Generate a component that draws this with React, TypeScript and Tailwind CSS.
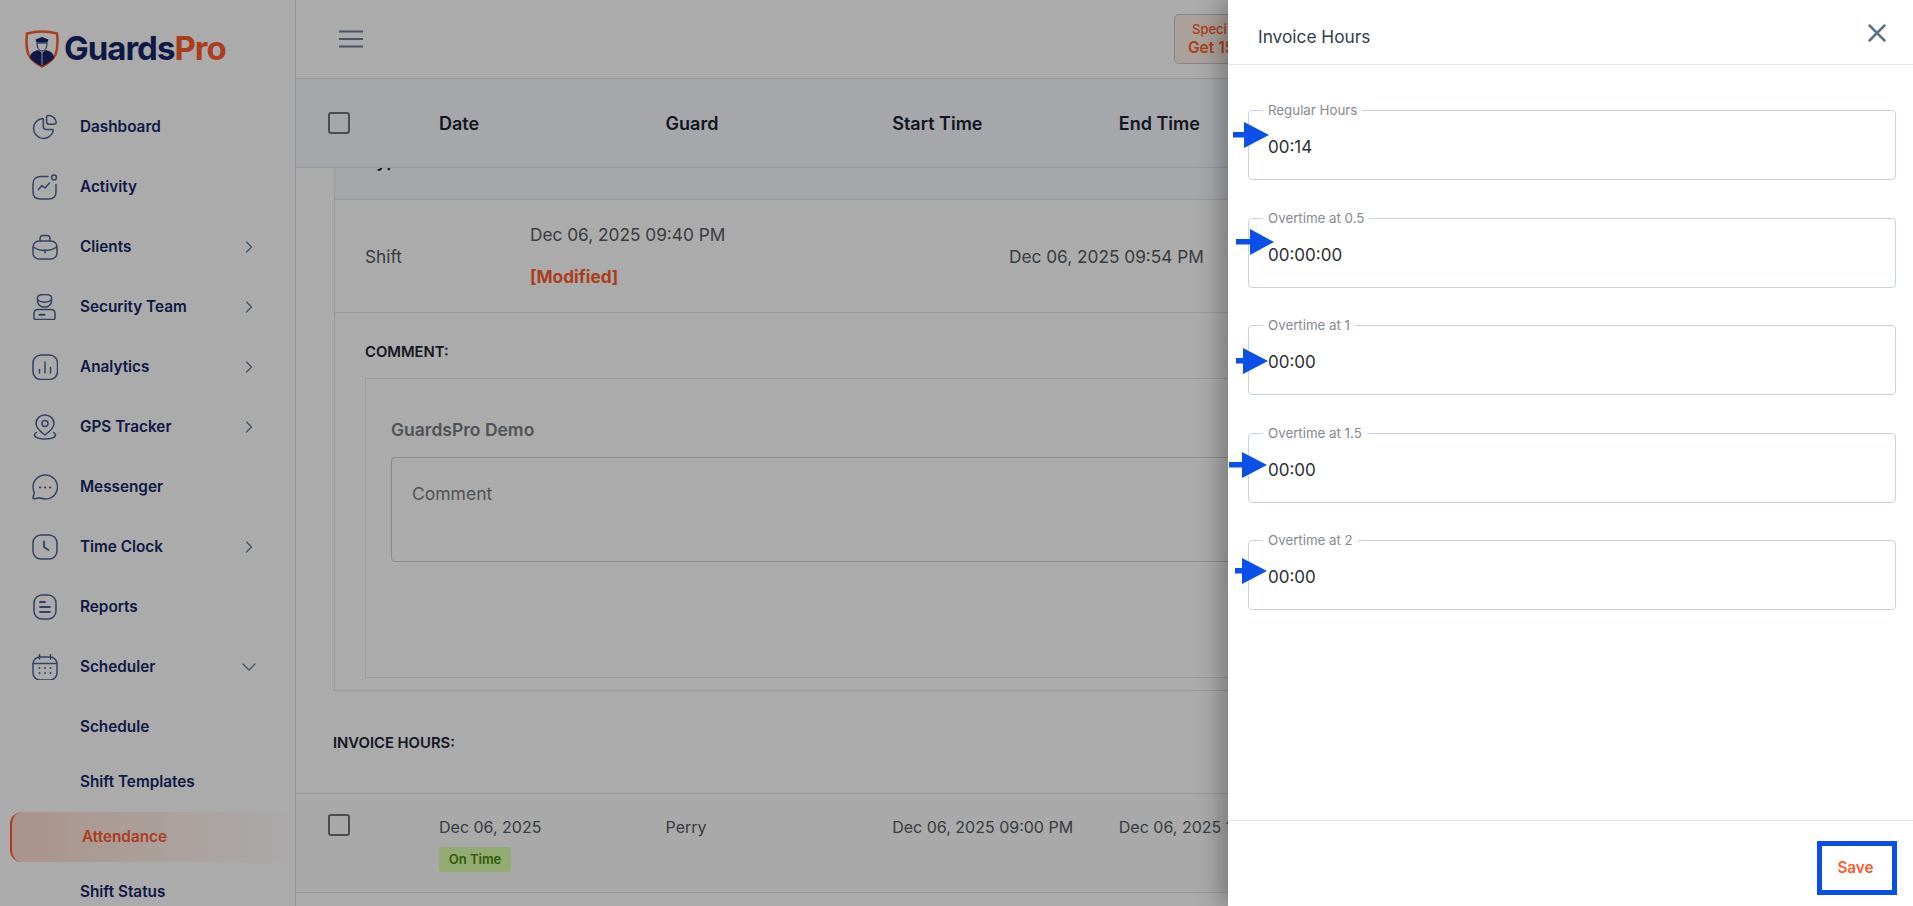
import { ReactNode } from "react";
import { ChevronDown, ChevronRight, X } from "lucide-react";

const FONT = "font-['Inter','Noto_Sans',sans-serif]";

function Ico({ children }: { children: ReactNode }) {
  return (
    <svg viewBox="0 0 26 26" fill="none" stroke="currentColor" strokeWidth="1.5" strokeLinecap="round" strokeLinejoin="round" className="size-[26px] shrink-0 text-[#4e6296]">
      {children}
    </svg>
  );
}

const ICONS: Record<string, ReactNode> = {
  Dashboard: (
    <>
      <path d="M10.5 4.5a10 10 0 1 0 10.8 12.2c.2-.8-.4-1.2-1-1.2h-6c-1.7 0-3-1.3-3-3V5.6c0-.7-.2-1.2-.8-1.1Z" />
      <path d="M16 1.5c3.6-.6 8 2.4 8.2 7 0 1-.7 1.7-1.6 1.7H17c-1.4 0-2.4-1-2.4-2.4V3c0-.8.6-1.4 1.4-1.5Z" />
    </>
  ),
  Activity: (
    <>
      <path d="M16 2.5H8.5C4.5 2.5 1 5 1 10v8c0 4.5 3 7 7.5 7h8c4.5 0 7.5-2.5 7.5-7v-7.5" />
      <circle cx="22" cy="3.5" r="2.4" />
      <path d="M6.5 15.5 10 11.5l3 2.5 4.5-5" />
    </>
  ),
  Clients: (
    <>
      <rect x="1" y="7" width="24" height="18" rx="6" />
      <path d="M8 7V5c0-2 1-3.5 3-3.5h4c2 0 3 1.5 3 3.500v2" />
      <path d="M1.5 13c3 2.500 7 3.500 11.500 3.500S21.500 15.500 24.500 13" />
      <path d="M13 16v3" />
    </>
  ),
  "Security Team": (
    <>
      <path d="M5.500 3.500c0-2 2-3 7-3s7 1 7 3V7c0 3.500-3 6-7 6s-7-2.500-7-6Z" />
      <path d="M5.500 6c2 1.500 4.500 2.300 7 2.300s5-.8 7-2.300" />
      <path d="M6 15.500h13c2.300 0 4 1.500 4 4V24c0 .8-.5 1.500-1.500 1.500h-18C2.500 25.500 2 24.800 2 24v-4.500c0-2.500 1.700-4 4-4Z" />
      <path d="M7.500 20.800h5" strokeWidth="2" />
    </>
  ),
  Analytics: (
    <>
      <rect x="1" y="1" width="24.5" height="24.5" rx="8" />
      <path d="M7.5 15.5V19M13 8v11M18.500 13.500V19" />
    </>
  ),
  "GPS Tracker": (
    <>
      <path d="M13 1c5 0 9 3.5 9 8.500 0 4.500-5.500 9-9 11.500-3.500-2.500-9-7-9-11.500C4 4.500 8 1 13 1Z" />
      <circle cx="13" cy="9.5" r="3" />
      <path d="M4.5 18.500c-1.500 1-2.500 2-2 3.200 1 2 5.500 3.300 10.500 3.300s9.500-1.300 10.500-3.300c.5-1.200-.5-2.200-2-3.200" />
    </>
  ),
  Messenger: (
    <>
      <path d="M13.5 1C6.500 1 1 6.500 1 13c0 2 .5 4 1.300 5.500l-1.300 5c-.2 1 .8 1.500 1.500 1.300l5-1c1.800.7 4 1.200 6 1.200 6.800 0 12-5.500 12-12S20 1 13.500 1Z" />
      <path d="M8 13.500h.2M13 13.500h.2M18 13.500h.2" strokeWidth="2.2" />
    </>
  ),
  "Time Clock": (
    <>
      <rect x="1" y="1" width="24" height="24" rx="8" />
      <path d="M12 7.500V13l4.500 3" strokeWidth="1.8" />
    </>
  ),
  Reports: (
    <>
      <rect x="2" y="1" width="22" height="24" rx="8" />
      <path d="M8 8h5M8 13h10M8 18h10" strokeWidth="1.8" />
    </>
  ),
  Scheduler: (
    <>
      <rect x="1" y="3" width="24" height="23" rx="7" />
      <path d="M7.500 .5V5M18.500 .5V5M1 9.500h24" />
      <path d="M7.500 14h.1M13 14h.1M18.500 14h.1M7.500 19h.1M13 19h.1M18.500 19h.1" strokeWidth="1.8" />
    </>
  ),
};

const NAV = [
  { name: "Dashboard" },
  { name: "Activity" },
  { name: "Clients", arrow: true },
  { name: "Security Team", arrow: true },
  { name: "Analytics", arrow: true },
  { name: "GPS Tracker", arrow: true },
  { name: "Messenger" },
  { name: "Time Clock", arrow: true },
  { name: "Reports" },
];

function Logo() {
  return (
    <div className="flex h-[78px] shrink-0 items-center pl-[25px] pt-[19px]">
      <svg viewBox="0 0 34 38" className="h-[38px] w-[34px] shrink-0">
        <path d="M2 3.500C8 2 13 1.500 17 1.500S26 2 32 3.500c1 9 .5 16-1.500 21-2.500 5-7.500 9-13.500 12-6-3-11-7-13.500-12-2-5-2.500-12-1.500-21Z" fill="#fff" stroke="#ff5c2b" strokeWidth="2.5" />
        <path d="M10.500 9.500 17 7l6.500 2.500-1 3h-11z" fill="#152868" />
        <path d="M12 13h10c0 4-1.500 8-5 8s-5-4-5-8Z" fill="#ffffff" stroke="#152868" strokeWidth="1" />
        <path d="M5 28c0-5 4-7 8-8l4 3 4-3c4 1 8 3 8 8-3 3.500-7 6-12 8-5-2-9-4.500-12-8Z" fill="#152868" />
        <path d="M17 23v12" stroke="#fff" strokeWidth="0.8" />
      </svg>
      <span className="ml-[5px] text-[33px] font-bold leading-none tracking-[-1px] text-[#152868]">
        Guards<span className="text-[#ff5c2b]">Pro</span>
      </span>
    </div>
  );
}

function Sidebar() {
  return (
    <aside className="flex w-[296px] shrink-0 flex-col border-r border-[#dfe3ea] bg-white text-[15.3px] font-semibold text-[#152868]">
      <Logo />
      <nav className="pt-[19px]">
        {NAV.map((n) => (
          <div key={n.name} className="flex h-[60px] items-center gap-[22px] pl-[32px] pr-[36px]">
            <Ico>{ICONS[n.name]}</Ico>
            <span className="flex-1">{n.name}</span>
            {n.arrow && <ChevronRight className="size-5 text-[#66799f]" strokeWidth={1.5} />}
          </div>
        ))}
        <div className="flex h-[60px] items-center gap-[22px] pl-[32px] pr-[34px]">
          <Ico>{ICONS.Scheduler}</Ico>
          <span className="flex-1">Scheduler</span>
          <ChevronDown className="size-6 text-[#66799f]" strokeWidth={1.25} />
        </div>
        <div className="flex h-[60px] items-center pl-[80px]">Schedule</div>
        <div className="flex h-[50px] items-center pl-[80px]">Shift Templates</div>
        <div className="ml-[10px] mt-[5px] flex h-[50px] items-center rounded-l-[12px] border-l-2 border-[#ff5c2b] bg-gradient-to-r from-[#ffdcd0] to-white pl-[70px] text-[#ff5c2b]">
          Attendance
        </div>
        <div className="flex h-[60px] items-center pl-[80px]">Shift Status</div>
      </nav>
    </aside>
  );
}

function Checkbox() {
  return <span className="block size-[22px] rounded-[3px] border-2 border-[#6f7378]" />;
}

function Main() {
  return (
    <main className="min-w-0 flex-1 bg-white text-[17.25px] text-[#555a60]">
      <header className="flex h-[79px] items-center border-b border-[#d8dde6] pl-[43px]">
        <svg viewBox="0 0 24 18" className="h-[18px] w-[24px] text-[#6f7f96]" fill="none" stroke="currentColor" strokeWidth="2">
          <path d="M0 1.500h24M0 9h24M0 16.500h24" />
        </svg>
        <div className="ml-[811px] flex h-[50px] w-[70px] flex-col justify-center whitespace-nowrap rounded-[5px] border border-[#c0c8d8] bg-[#fff0e6] text-[#ff5c2b]">
          <span className="ml-[17px] text-[13px] font-medium leading-[18px]">Speci</span>
          <span className="ml-[13px] text-[15.5px] font-semibold leading-[20px]">Get 15</span>
        </div>
      </header>
      <div className="grid h-[89px] grid-cols-[111px_226.6px_226.6px_226.6px_226.6px] items-center border-b border-[#dfe3ea] bg-[#f6f9ff] pl-[32px] text-[18px] font-semibold text-[#1c2433]">
        <Checkbox />
        <span>Date</span>
        <span>Guard</span>
        <span>Start Time</span>
        <span>End Time</span>
      </div>
      <section className="ml-[38px] flex h-[523px] flex-col border-b border-l border-[#dfe3ea]">
        <div className="h-[32px] overflow-hidden border-b border-[#dfe3ea] bg-[#f6f9ff] pl-[31px] font-semibold leading-none text-[#1c2433]">
          <span className="relative -top-[16px] block">Type</span>
        </div>
        <div className="relative flex h-[113px] items-center border-b border-[#dfe3ea] pl-[30px]">
          <span className="w-[165px] pt-[2px]">Shift</span>
          <div className="flex w-[480px] flex-col gap-[18px]">
            <span className="leading-[24px]">Dec 06, 2025 09:40 PM</span>
            <span className="font-bold leading-[24px] text-[#ff5c2b]">[Modified]</span>
          </div>
          <span className="-ml-[1px] pt-[2px]">Dec 06, 2025 09:54 PM</span>
        </div>
        <div className="px-[30px]">
          <h3 className="mt-[29px] h-[36px] text-[14.8px] font-semibold leading-[20px] text-[#1c2433]">COMMENT:</h3>
          <div className="h-[300px] border border-[#e3e6eb] px-[25px] pt-[41px]">
            <div className="text-[17.5px] font-semibold leading-[20px] text-[#777c82]">GuardsPro Demo</div>
            <div className="mt-[17px] h-[105px] rounded-[4px] border border-[#c8d0de] px-[20px] pt-[24px] text-[17.5px] leading-[24px] text-[#777c82]">
              Comment
            </div>
          </div>
        </div>
      </section>
      <h3 className="flex h-[102px] items-center pl-[37px] pt-[2px] text-[14.8px] font-semibold text-[#1c2433]">INVOICE HOURS:</h3>
      <div className="grid h-[100px] grid-cols-[111px_226.6px_226.6px_226.6px_226.6px] border-y border-[#dfe3ea] bg-[#fcfcfc] pl-[32px] pt-[20px] text-[16px]">
        <Checkbox />
        <div>
          <div className="leading-[26px]">Dec 06, 2025</div>
          <span className="mt-[7px] block w-[72px] rounded-[3px] bg-[#dbffaa] text-center text-[13px] font-semibold leading-[25px] text-[#4a8a0c]">
            On Time
          </span>
        </div>
        <span className="leading-[26px]">Perry</span>
        <span className="leading-[26px]">Dec 06, 2025 09:00 PM</span>
        <span className="whitespace-nowrap leading-[26px]">Dec 06, 2025 10:00 PM</span>
      </div>
    </main>
  );
}

const FIELDS = [
  { label: "Regular Hours", value: "00:14", mt: "mt-[45px]" },
  { label: "Overtime at 0.5", value: "00:00:00", mt: "mt-[38px]" },
  { label: "Overtime at 1", value: "00:00", mt: "mt-[37px]" },
  { label: "Overtime at 1.5", value: "00:00", mt: "mt-[38px]" },
  { label: "Overtime at 2", value: "00:00", mt: "mt-[37px]" },
];

// blue annotation arrows painted on top of the drawer, coordinates relative to it
const ARROWS = [
  { left: 5, top: 122, base: 11, len: 25 },
  { left: 8, top: 229, base: 14, len: 24 },
  { left: 8, top: 348, base: 7, len: 25 },
  { left: 1, top: 452, base: 13, len: 25 },
  { left: 7, top: 558, base: 7, len: 25 },
];

function Arrow({ left, top, base, len }: { left: number; top: number; base: number; len: number }) {
  return (
    <svg viewBox={`0 0 ${base + len} 26`} width={base + len} height={26} className="absolute" style={{ left, top }}>
      <path d={`M0 10h${base}V0l${len} 13-${len} 13V15.5H0Z`} fill="#0a4fe8" />
    </svg>
  );
}

function Drawer() {
  return (
    <div className="absolute bottom-0 right-0 top-0 flex w-[685px] flex-col bg-white shadow-[-8px_0_22px_rgba(0,0,0,0.28)]">
      <div className="flex h-[65px] shrink-0 items-start justify-between border-b border-[#e5e7eb] pl-[30px] pr-[21px]">
        <span className="mt-[25px] text-[17.3px] leading-[24px] text-[#333c4a]">Invoice Hours</span>
        <X className="mt-[18px] size-[30px] text-[#5f6f86]" strokeWidth={2} />
      </div>
      <div className="flex-1 pl-[20px] pr-[17px]">
        {FIELDS.map((f) => (
          <div key={f.label} className={`relative h-[70px] rounded-[4px] border border-[#c9d2e2] ${f.mt}`}>
            <span className="absolute -top-[10px] left-[14px] bg-white px-[5px] text-[13.3px] leading-[18px] text-[#85898f]">
              {f.label}
            </span>
            <div className="pl-[19px] pt-[24px] text-[17px] leading-[24px] text-[#2c2f34]">{f.value}</div>
          </div>
        ))}
      </div>
      <div className="flex h-[86px] shrink-0 items-start justify-end border-t border-[#e5e7eb] pr-[16px] pt-[20px]">
        <button className="h-[54px] w-[80px] border-[5px] border-[#0a4fe8] bg-white pr-[3px] text-[15.3px] font-semibold text-[#ff5c2b]">
          Save
        </button>
      </div>
      {ARROWS.map((a) => (
        <Arrow key={a.top} {...a} />
      ))}
    </div>
  );
}

export default function App() {
  return (
    <div className={`relative flex h-[906px] w-full overflow-hidden ${FONT}`}>
      <Sidebar />
      <Main />
      <div className="absolute inset-0 bg-black/33" />
      <Drawer />
    </div>
  );
}
